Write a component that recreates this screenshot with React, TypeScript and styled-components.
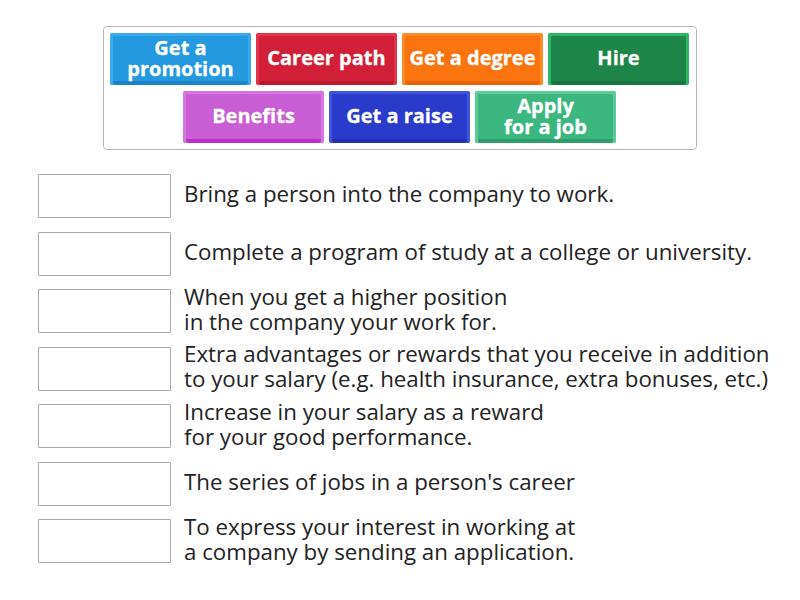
import React from "react";
import styled, { createGlobalStyle } from "styled-components";

const Global = createGlobalStyle`
  html, body { margin: 0; padding: 0; background: #fff; }
  body { font-family: "Open Sans", "Liberation Sans", sans-serif; }
`;

const Page = styled.div`
  width: 800px;
  height: 600px;
  box-sizing: border-box;
  padding-top: 26px;
  display: flex;
  flex-direction: column;
  align-items: center;
`;

const Bank = styled.div`
  width: 594px;
  box-sizing: border-box;
  border: 1px solid #b4b4b4;
  border-radius: 4px;
  padding: 6px 0;
  display: flex;
  flex-wrap: wrap;
  justify-content: center;
  gap: 6px 5px;
  margin-left: -1px;
`;

type Tone = { base: string; light: string; dark: string };

const Tile = styled.div<{ $tone: Tone }>`
  width: 141px;
  height: 52px;
  box-sizing: border-box;
  border-radius: 3px;
  background: ${(p) => p.$tone.base};
  box-shadow: inset 3px 0 0 ${(p) => p.$tone.light},
    inset -3px 0 0 ${(p) => p.$tone.light},
    inset 0 3px 0 ${(p) => p.$tone.light},
    inset 0 -4px 0 ${(p) => p.$tone.dark};
  color: #fff;
  font-weight: 700;
  font-size: 20px;
  line-height: 21px;
  display: flex;
  align-items: center;
  justify-content: center;
  text-align: center;
  padding-bottom: 3px;
  -webkit-text-stroke: 0.3px #fff;
`;

const List = styled.div`
  width: 100%;
  box-sizing: border-box;
  padding: 24px 0 0 38px;
  display: flex;
  flex-direction: column;
  gap: 13.5px;
`;

const Row = styled.div`
  display: flex;
  align-items: center;
  gap: 13px;
  height: 44px;
`;

const Slot = styled.div`
  width: 133px;
  height: 44px;
  box-sizing: border-box;
  border: 1px solid #a8a8a8;
  border-radius: 1px;
  flex: none;
`;

const Clue = styled.div`
  font-size: 22.3px;
  line-height: 25px;
  color: #222;
  white-space: pre-line;
  margin-top: -5px;
`;

const tones: Record<string, Tone> = {
  blue: { base: "#2599e0", light: "#3aa9ee", dark: "#1c82c6" },
  red: { base: "#d21f38", light: "#e23449", dark: "#b91a30" },
  orange: { base: "#fb7410", light: "#ff8a26", dark: "#e56508" },
  green: { base: "#1d8548", light: "#2eb866", dark: "#187440" },
  pink: { base: "#c95dd4", light: "#d776e0", dark: "#b92fc8" },
  navy: { base: "#2a3acb", light: "#4054e0", dark: "#2230b0" },
  mint: { base: "#3bb67f", light: "#5ccb97", dark: "#2e9c6b" },
};

const tiles: { label: string; tone: Tone }[] = [
  { label: "Get a\npromotion", tone: tones.blue },
  { label: "Career path", tone: tones.red },
  { label: "Get a degree", tone: tones.orange },
  { label: "Hire", tone: tones.green },
  { label: "Benefits", tone: tones.pink },
  { label: "Get a raise", tone: tones.navy },
  { label: "Apply\nfor a job", tone: tones.mint },
];

const clues = [
  "Bring a person into the company to work.",
  "Complete a program of study at a college or university.",
  "When you get a higher position\nin the company your work for.",
  "Extra advantages or rewards that you receive in addition\nto your salary (e.g. health insurance, extra bonuses, etc.)",
  "Increase in your salary as a reward\nfor your good performance.",
  "The series of jobs in a person's career",
  "To express your interest in working at\na company by sending an application.",
];

const TileText = styled.span`
  white-space: pre-line;
`;

export default function App() {
  return (
    <>
      <Global />
      <Page>
        <Bank>
          {tiles.map((t) => (
            <Tile key={t.label} $tone={t.tone}>
              <TileText>{t.label}</TileText>
            </Tile>
          ))}
        </Bank>
        <List>
          {clues.map((c) => (
            <Row key={c}>
              <Slot />
              <Clue>{c}</Clue>
            </Row>
          ))}
        </List>
      </Page>
    </>
  );
}
